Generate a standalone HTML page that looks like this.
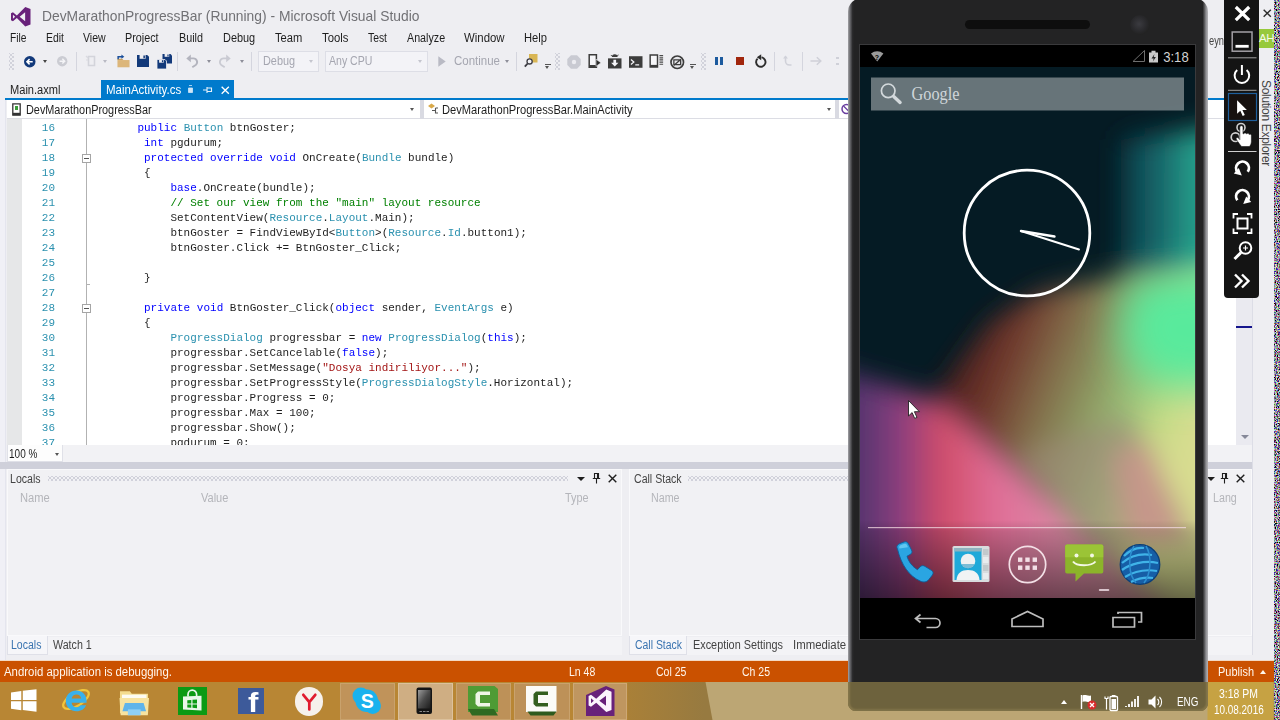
<!DOCTYPE html>
<html lang="en">
<head>
<meta charset="utf-8">
<title>DevMarathonProgressBar (Running) - Microsoft Visual Studio</title>
<style>
*{box-sizing:border-box;margin:0;padding:0}
html,body{width:1280px;height:720px;overflow:hidden}
body{background:#eeeef2;font-family:"Liberation Sans",sans-serif;font-size:12px;color:#1e1e1e;position:relative}
.abs{position:absolute}
svg{position:absolute;overflow:visible}
.t{position:absolute;white-space:pre;line-height:1;transform-origin:0 0;font-family:"Liberation Sans",sans-serif}
.sep{position:absolute;top:52px;width:1px;height:19px;background:#d4d5de}
.dd{position:absolute;width:0;height:0;border-left:2.5px solid transparent;border-right:2.5px solid transparent;border-top:3px solid #555}
.combo{position:absolute;top:51px;height:21px;border:1px solid #dddee6;background:#f3f3f7}
/* editor */
#editor{left:7px;top:119px;width:1229px;height:326px;background:#fff;overflow:hidden}
#gutter{left:0;top:0;width:15px;height:327px;background:#e6e7e8}
#outline-line{left:79px;top:0;width:1px;height:327px;background:#b2b2b2}
.ln{position:absolute;left:19px;width:29px;transform:scaleY(1.06);text-align:right;font-family:"Liberation Mono",monospace;font-size:11px;line-height:15px;color:#2b91af;height:15px}
.cl{position:absolute;left:84.2px;transform:scaleY(1.06);font-family:"Liberation Mono",monospace;font-size:11px;line-height:15px;height:15px;white-space:pre;color:#1e1e1e}
.k{color:#0000ff}.ty{color:#2b91af}.c{color:#008000}.s{color:#a31515}
.fold{position:absolute;left:74.5px;width:9px;height:9px;border:1px solid #a5a5a5;background:#fff}
.fold:after{content:"";position:absolute;left:1px;top:3px;width:5px;height:1px;background:#555}
.panel{position:absolute;background:#f1f1f4;border:1px solid #f9f9fb}
.grip{position:absolute;height:5px;background-image:radial-gradient(circle,#c3c4d0 0.65px,transparent 0.85px),radial-gradient(circle,#c3c4d0 0.65px,transparent 0.85px);background-size:4px 4px;background-position:0 0,2px 2px}
.vgrip{position:absolute;width:5px;background-image:radial-gradient(circle,#c6c7d2 0.65px,transparent 0.85px),radial-gradient(circle,#c6c7d2 0.65px,transparent 0.85px);background-size:4px 4px;background-position:0 0,2px 2px}
</style>
</head>
<body>

<!-- ================= Visual Studio window ================= -->
<div class="abs" style="left:0;top:0;width:1280px;height:682px;background:#eeeef2"></div>

<div class="abs" style="left:0;top:100px;width:6px;height:561px;background:#f0f0f6;border-right:1px solid #e4e5ee"></div>
<!-- VS logo -->
<svg style="left:11px;top:6.5px" width="19.5" height="19.5" viewBox="0 0 24 24"><path fill="#68217a" d="M17.58 0L7.19 10.36 2.4 6.6 0 7.8v8.4l2.4 1.2 4.79-3.76L17.58 24 24 21.42V2.58L17.58 0zM2.4 14.58V9.42L5.1 12l-2.7 2.58zM17.4 17.4L10.62 12l6.78-5.4v10.8z"/></svg>

<!-- document tabs -->
<div class="abs" style="left:101px;top:80px;width:133px;height:19px;background:#007acc"></div>
<div class="abs" style="left:5px;top:98px;width:1247px;height:2px;background:#007acc"></div>

<!-- navigation bar -->
<div class="abs" style="left:7px;top:100px;width:1245px;height:19px;background:#fff;border-bottom:1px solid #dcdde4"></div>
<div class="abs" style="left:420px;top:100px;width:4px;height:19px;background:#d9dae2"></div>
<div class="abs" style="left:835px;top:100px;width:4px;height:19px;background:#d9dae2"></div>
<div class="dd" style="left:410px;top:108px"></div>
<div class="dd" style="left:826.5px;top:108px"></div>

<!-- ===== toolbar row ===== -->
<div class="vgrip" style="left:9px;top:53px;height:17px"></div>
<!-- back -->
<svg style="left:24px;top:55.5px" width="11.5" height="11.5" viewBox="0 0 14 14"><circle cx="7" cy="7" r="7" fill="#12397a"/><path d="M10.6 7H4M6.8 3.8L3.6 7l3.2 3.2" fill="none" stroke="#fff" stroke-width="1.9"/></svg>
<div class="dd" style="left:42.5px;top:60px;border-top-color:#444"></div>
<!-- forward (disabled) -->
<svg style="left:56.8px;top:56px" width="10.4" height="10.4" viewBox="0 0 14 14"><circle cx="7" cy="7" r="7" fill="#cbccd3"/><path d="M3.4 7H10M7.2 3.8L10.4 7l-3.2 3.2" fill="none" stroke="#f4f4f7" stroke-width="1.9"/></svg>
<div class="sep" style="left:75.5px"></div>
<!-- new project (disabled) -->
<svg style="left:85px;top:54px" width="13" height="14" viewBox="0 0 13 14"><path d="M3.5 2.5h6v9h-6z" fill="none" stroke="#d3d4db" stroke-width="1.6"/><path d="M1 2l2 2M1 6h2" stroke="#d9dae0" stroke-width="1.2"/></svg>
<div class="dd" style="left:103px;top:60px;border-top-color:#b9bac4"></div>
<!-- open -->
<svg style="left:115.5px;top:53.5px" width="14.5" height="14" viewBox="0 0 15 14"><path d="M1.5 6h12.5v7.5H1.5z" fill="#dcb67a"/><path d="M1.5 6V4.6h5L7.6 6z" fill="#c9a15f"/><path d="M2.2 5.2V2.6h4.3" fill="none" stroke="#1b4f9b" stroke-width="1.5"/><path d="M5.6 0.4l3 2.2-3 2.2z" fill="#1b4f9b"/></svg>
<!-- save -->
<svg style="left:137px;top:55px" width="12" height="12" viewBox="0 0 12 12"><path d="M0 0h10.2L12 1.8V12H0z" fill="#12397a"/><path d="M2.6 0h6v3.8h-6z" fill="#eeeef2"/><path d="M6.4 0.6h1.5v2.6H6.4z" fill="#12397a"/><path d="M2 7h8v5H2z" fill="#12397a"/></svg>
<!-- save all -->
<svg style="left:157px;top:53.5px" width="15" height="15" viewBox="0 0 15 15"><path d="M5.5 0h8L15 1.5V9.5H5.5z" fill="#12397a"/><path d="M7.6 0h4.6v2.8H7.6z" fill="#eeeef2"/><path d="M10.4 0.4h1.2v2h-1.2z" fill="#12397a"/><path d="M0 5.5h8l1.5 1.5V15H0z" fill="#12397a" stroke="#eeeef2" stroke-width="0.8"/><path d="M2.1 5.9h4.6v2.8H2.1z" fill="#eeeef2"/><path d="M4.9 6.2h1.2v2H4.9z" fill="#12397a"/></svg>
<div class="sep" style="left:177px"></div>
<!-- undo (disabled) -->
<svg style="left:185.5px;top:53.5px" width="13" height="14" viewBox="0 0 13 14"><path d="M4 4.4H7.4a3.7 3.7 0 0 1 2.3 6.6L6.3 13.2" fill="none" stroke="#b3b4be" stroke-width="1.9"/><path d="M0.3 4.4L4.8 0.6V8.2z" fill="#b3b4be"/></svg>
<div class="dd" style="left:206.5px;top:60px;border-top-color:#8d8e99"></div>
<!-- redo (disabled) -->
<svg style="left:218px;top:53.5px" width="13" height="14" viewBox="0 0 13 14"><g transform="translate(13 0) scale(-1 1)"><path d="M4 4.4H7.4a3.7 3.7 0 0 1 2.3 6.6L6.3 13.2" fill="none" stroke="#c9cad2" stroke-width="1.7"/><path d="M0.3 4.4L4.8 0.6V8.2z" fill="#c9cad2"/></g></svg>
<div class="dd" style="left:239.5px;top:60px;border-top-color:#8d8e99"></div>
<div class="sep" style="left:251px"></div>
<!-- config combos -->
<div class="combo" style="left:258px;width:61px"></div>
<div class="dd" style="left:309px;top:60px;border-top-color:#c4c5ce"></div>
<div class="combo" style="left:324.5px;width:103.5px"></div>
<div class="dd" style="left:418px;top:60px;border-top-color:#c4c5ce"></div>
<!-- continue -->
<svg style="left:437.5px;top:55.5px" width="8" height="11" viewBox="0 0 8 11"><path d="M0.3 0.3L7.7 5.5 0.3 10.7z" fill="#b9bac4"/></svg>
<div class="dd" style="left:504.5px;top:60px;border-top-color:#8d8e99"></div>
<div class="sep" style="left:516px"></div>
<!-- find in files -->
<svg style="left:524px;top:53px" width="14" height="15" viewBox="0 0 14 15"><path d="M5 1h8.5v8.5H5z" fill="#d9b655"/><circle cx="5.6" cy="8.4" r="2.6" fill="#f2f2f6" stroke="#3d3d44" stroke-width="1.3"/><path d="M3.8 10.4L0.8 13.6" stroke="#3d3d44" stroke-width="1.8"/></svg>
<!-- overflow -->
<div class="abs" style="left:545px;top:63.5px;width:6px;height:1.3px;background:#555"></div>
<div class="dd" style="left:545px;top:66px;border-top-color:#555"></div>
<div class="vgrip" style="left:555px;top:53px;height:17px"></div>
<!-- hex (disabled) -->
<svg style="left:566.5px;top:54.5px" width="14" height="14" viewBox="0 0 14 14"><path d="M4 0.3h6L13.7 4v6L10 13.7H4L0.3 10V4z" fill="#c9cad2"/><circle cx="7" cy="7" r="2.2" fill="#ececf1"/></svg>
<!-- phone + play -->
<svg style="left:587.5px;top:54px" width="13" height="15" viewBox="0 0 13 15"><path d="M1.2 0.8h7.2v12.4H1.2z" fill="#f6f6f9" stroke="#3c3c3c" stroke-width="1.5"/><path d="M1.2 11h7.2v2.2H1.2z" fill="#3c3c3c"/><path d="M8 5.2l5 3.6-5 3.6z" fill="#2d2d2d" stroke="#eeeef2" stroke-width="0.6"/></svg>
<!-- android box -->
<svg style="left:608px;top:54px" width="13.5" height="14.5" viewBox="0 0 14 15"><path d="M4 3.2a3 3 0 0 1 6 0z" fill="#3c3c3c"/><path d="M3 1l1.5 1.6M11 1L9.5 1.6" stroke="#3c3c3c" stroke-width="0.9"/><path d="M0 4.5h14V15H0z" fill="#3c3c3c"/><path d="M5.6 6h2.8v3h2.4L7 13 3.2 9h2.4z" fill="#f4f4f8"/></svg>
<!-- terminal -->
<svg style="left:629px;top:56px" width="13.5" height="12" viewBox="0 0 14 12"><path d="M0 0h14v12H0z" fill="#3c3c3c"/><path d="M2 3.5l3 2.5-3 2.5M6.5 9h4" fill="none" stroke="#f4f4f8" stroke-width="1.3"/></svg>
<!-- phone + lines -->
<svg style="left:649px;top:54px" width="14.5" height="15" viewBox="0 0 15 15"><path d="M1.2 0.8h7.6v12.4H1.2z" fill="#f6f6f9" stroke="#3c3c3c" stroke-width="1.5"/><path d="M1.2 11h7.6v2.2H1.2z" fill="#3c3c3c"/><path d="M10.8 1.5h3.8M10.8 3.7h3.8M10.8 5.9h3.8M10.8 8.1h3.8M10.8 10.3h3.8" stroke="#4a4a4a" stroke-width="1.2"/></svg>
<!-- circle crossed -->
<svg style="left:669.5px;top:54.5px" width="14.5" height="14.5" viewBox="0 0 15 15"><circle cx="7.5" cy="7.5" r="6.5" fill="#e6e6ea" stroke="#3c3c3c" stroke-width="1.7"/><path d="M4 5h7v5H4zM3.8 10.8l7.6-6.4" fill="none" stroke="#3c3c3c" stroke-width="1.3"/></svg>
<div class="abs" style="left:690px;top:63.5px;width:6px;height:1.3px;background:#555"></div>
<div class="dd" style="left:690px;top:66px;border-top-color:#555"></div>
<div class="vgrip" style="left:701px;top:53px;height:17px"></div>
<!-- pause / stop / restart -->
<div class="abs" style="left:714.5px;top:56.5px;width:3px;height:8.5px;background:#1c5a9e"></div>
<div class="abs" style="left:719.5px;top:56.5px;width:3px;height:8.5px;background:#1c5a9e"></div>
<div class="abs" style="left:735.5px;top:57px;width:8px;height:8px;background:#a1260d"></div>
<svg style="left:754px;top:54px" width="13" height="14" viewBox="0 0 13 14"><path d="M3.6 4.6A4.7 4.7 0 1 0 7.5 3.4" fill="none" stroke="#2d2d2d" stroke-width="1.9"/><path d="M7.2 0.2v6L2.8 3.2z" fill="#2d2d2d"/></svg>
<div class="sep" style="left:773.5px"></div>
<!-- step (disabled) -->
<svg style="left:782px;top:55px" width="12" height="12" viewBox="0 0 12 12"><path d="M3.5 1.5v4.5a4 4 0 0 0 4 4h2" fill="none" stroke="#d0d1d9" stroke-width="1.6"/><path d="M1 3.5l2.5-3 2.5 3z" fill="#d0d1d9"/></svg>
<div class="sep" style="left:801.5px"></div>
<svg style="left:810px;top:56px" width="12" height="10" viewBox="0 0 12 10"><path d="M0.5 5h10M6.8 1.2L10.8 5l-4 3.8" fill="none" stroke="#cfd0d8" stroke-width="1.5"/></svg>
<div class="abs" style="left:836px;top:56.5px;width:2.5px;height:2.5px;background:#cfd0d8"></div>
<div class="abs" style="left:836px;top:62.5px;width:2.5px;height:2.5px;background:#cfd0d8"></div>
<!-- tab icons -->
<svg style="left:188px;top:85px" width="5" height="8" viewBox="0 0 5 8"><path d="M1 0.5h3M0.5 3h4v4.5h-4z" fill="#cfe6f7" stroke="#cfe6f7" stroke-width="0.8"/></svg>
<svg style="left:203px;top:86px" width="10" height="8" viewBox="0 0 10 8"><path d="M0 4h4M4 1v6M4 2h4.5v3.5H4M4 5.5h4.5" fill="none" stroke="#e4f1fb" stroke-width="1.1"/></svg>
<svg style="left:221px;top:85.5px" width="8.5" height="8.5" viewBox="0 0 9 9"><path d="M0.7 0.7l7.6 7.6M8.3 0.7l-7.6 7.6" stroke="#fff" stroke-width="1.4"/></svg>
<!-- nav bar icons -->
<svg style="left:12px;top:103px" width="9" height="13" viewBox="0 0 9 13"><path d="M0.8 0.8h7.4v11.4H0.8z" fill="#fff" stroke="#333" stroke-width="1.3"/><path d="M0.8 9.8h7.4v2.4H0.8z" fill="#333"/><path d="M3 3h3v4H3z" fill="#3a9d3a"/></svg>
<svg style="left:427px;top:103px" width="12" height="12" viewBox="0 0 12 12"><path d="M1 3l3.5-2.5L8 3 4.5 5.5z" fill="#d9a94a"/><path d="M5 7.5h3.5M8.5 5v5h2.5M8.5 5h2.5" fill="none" stroke="#555" stroke-width="1.1"/></svg>
<svg style="left:841px;top:103px" width="11" height="12" viewBox="0 0 11 12"><circle cx="5.5" cy="6" r="4.5" fill="#fff" stroke="#6a3fa0" stroke-width="1.5"/><path d="M2.5 3l6 6" stroke="#6a3fa0" stroke-width="1.2"/></svg>


<!-- code editor -->
<div class="abs" id="editor">
<div class="abs" id="gutter"></div>
<div class="abs" id="outline-line"></div>
<div class="abs" style="left:80px;top:165px;width:3px;height:1px;background:#b2b2b2"></div>
<div class="ln" style="top:2px">16</div>
<div class="cl" style="top:2px">       <span class="k">public</span> <span class="ty">Button</span> btnGoster;</div>
<div class="ln" style="top:17px">17</div>
<div class="cl" style="top:17px">        <span class="k">int</span> pgdurum;</div>
<div class="ln" style="top:32px">18</div>
<div class="cl" style="top:32px">        <span class="k">protected</span> <span class="k">override</span> <span class="k">void</span> OnCreate(<span class="ty">Bundle</span> bundle)</div>
<div class="ln" style="top:47px">19</div>
<div class="cl" style="top:47px">        {</div>
<div class="ln" style="top:62px">20</div>
<div class="cl" style="top:62px">            <span class="k">base</span>.OnCreate(bundle);</div>
<div class="ln" style="top:77px">21</div>
<div class="cl" style="top:77px">            <span class="c">// Set our view from the "main" layout resource</span></div>
<div class="ln" style="top:92px">22</div>
<div class="cl" style="top:92px">            SetContentView(<span class="ty">Resource</span>.<span class="ty">Layout</span>.Main);</div>
<div class="ln" style="top:107px">23</div>
<div class="cl" style="top:107px">            btnGoster = FindViewById&lt;<span class="ty">Button</span>&gt;(<span class="ty">Resource</span>.<span class="ty">Id</span>.button1);</div>
<div class="ln" style="top:122px">24</div>
<div class="cl" style="top:122px">            btnGoster.Click += BtnGoster_Click;</div>
<div class="ln" style="top:137px">25</div>
<div class="ln" style="top:152px">26</div>
<div class="cl" style="top:152px">        }</div>
<div class="ln" style="top:167px">27</div>
<div class="ln" style="top:182px">28</div>
<div class="cl" style="top:182px">        <span class="k">private</span> <span class="k">void</span> BtnGoster_Click(<span class="k">object</span> sender, <span class="ty">EventArgs</span> e)</div>
<div class="ln" style="top:197px">29</div>
<div class="cl" style="top:197px">        {</div>
<div class="ln" style="top:212px">30</div>
<div class="cl" style="top:212px">            <span class="ty">ProgressDialog</span> progressbar = <span class="k">new</span> <span class="ty">ProgressDialog</span>(<span class="k">this</span>);</div>
<div class="ln" style="top:227px">31</div>
<div class="cl" style="top:227px">            progressbar.SetCancelable(<span class="k">false</span>);</div>
<div class="ln" style="top:242px">32</div>
<div class="cl" style="top:242px">            progressbar.SetMessage(<span class="s">"Dosya indiriliyor..."</span>);</div>
<div class="ln" style="top:257px">33</div>
<div class="cl" style="top:257px">            progressbar.SetProgressStyle(<span class="ty">ProgressDialogStyle</span>.Horizontal);</div>
<div class="ln" style="top:272px">34</div>
<div class="cl" style="top:272px">            progressbar.Progress = 0;</div>
<div class="ln" style="top:287px">35</div>
<div class="cl" style="top:287px">            progressbar.Max = 100;</div>
<div class="ln" style="top:302px">36</div>
<div class="cl" style="top:302px">            progressbar.Show();</div>
<div class="ln" style="top:317px">37</div>
<div class="cl" style="top:317px">            pgdurum = 0;</div>
<div class="fold" style="top:35px"></div>
<div class="fold" style="top:185px"></div>

</div>
<!-- editor vertical scrollbar -->
<div class="abs" style="left:1236px;top:119px;width:16px;height:326px;background:#eaeaf0"></div>
<div class="abs" style="left:1236px;top:326px;width:16px;height:2px;background:#15158c"></div>
<div class="dd" style="left:1241px;top:435px;border-top-color:#868999;border-left-width:4px;border-right-width:4px;border-top-width:4px"></div>

<!-- zoom / h-scroll row -->
<div class="abs" style="left:7px;top:445px;width:1245px;height:17px;background:#f2f2f5"></div>
<div class="abs" style="left:7px;top:445px;width:55.5px;height:17px;background:#fdfdfd;border:1px solid #e0e1e8;border-top:0"></div>
<div class="dd" style="left:54.5px;top:453px"></div>

<!-- splitter -->
<div class="abs" style="left:0;top:462px;width:1252px;height:7px;background:#cfd0da"></div>

<!-- Locals panel -->
<div class="panel" style="left:7px;top:469px;width:615px;height:167px"></div>
<div class="grip" style="left:48px;top:476px;width:520px"></div>
<div class="dd" style="left:577px;top:477px;border-left-width:4px;border-right-width:4px;border-top-width:4px;border-top-color:#1e1e1e"></div>
<svg style="left:592px;top:473px" width="9" height="11" viewBox="0 0 9 11"><path d="M2.5 0.5h4v5h-4zM5.5 0.5v5M0.8 5.5h7.4M4.5 5.5v5" fill="none" stroke="#1e1e1e" stroke-width="1.1"/></svg>
<svg style="left:608px;top:474px" width="9" height="9" viewBox="0 0 9 9"><path d="M0.7 0.7l7.6 7.6M8.3 0.7l-7.6 7.6" stroke="#1e1e1e" stroke-width="1.4"/></svg>
<div class="abs" style="left:48px;top:636.5px;width:574px;height:18px;background:#f3f3f6"></div>
<div class="abs" style="left:7px;top:636px;width:41px;height:19px;background:#f6f6f9;border:1px solid #dfe0e8;border-top:0"></div>

<!-- Call Stack panel -->
<div class="panel" style="left:629px;top:469px;width:623px;height:167px"></div>
<div class="grip" style="left:688px;top:476px;width:160px"></div>
<div class="abs" style="left:687px;top:636.5px;width:565px;height:18px;background:#f3f3f6"></div>
<div class="abs" style="left:629px;top:636px;width:58px;height:19px;background:#f6f6f9;border:1px solid #dfe0e8;border-top:0"></div>
<!-- right end of call stack panel (visible past the emulator) -->
<div class="dd" style="left:1207px;top:477px;border-left-width:4px;border-right-width:4px;border-top-width:4px;border-top-color:#1e1e1e"></div>
<svg style="left:1220px;top:473px" width="9" height="11" viewBox="0 0 9 11"><path d="M2.5 0.5h4v5h-4zM5.5 0.5v5M0.8 5.5h7.4M4.5 5.5v5" fill="none" stroke="#1e1e1e" stroke-width="1.1"/></svg>
<svg style="left:1236px;top:474px" width="9" height="9" viewBox="0 0 9 9"><path d="M0.7 0.7l7.6 7.6M8.3 0.7l-7.6 7.6" stroke="#1e1e1e" stroke-width="1.4"/></svg>
<div class="abs" style="left:1252px;top:100px;width:1px;height:555px;background:#dcdde6"></div>

<!-- status bar -->
<div class="abs" style="left:0;top:661px;width:1280px;height:21px;background:#ca5100"></div>
<div class="abs" style="left:0;top:660px;width:1280px;height:1px;background:#f3d9c4"></div>

<div class="dd" style="left:1260px;top:669.5px;border-top:0;border-bottom:4px solid #fff6ec;border-left-width:3.5px;border-right-width:3.5px"></div>

<!-- ===== text labels ===== -->
<div class="t" style="left:41.8px;top:9.3px;font-size:14.3px;color:#717175;transform:scaleX(0.968)">DevMarathonProgressBar (Running) - Microsoft Visual Studio</div>
<div class="t" style="left:9.7px;top:32.1px;font-size:12px;color:#1e1e1e;transform:scaleX(0.853)">File</div>
<div class="t" style="left:45.5px;top:32.1px;font-size:12px;color:#1e1e1e;transform:scaleX(0.87)">Edit</div>
<div class="t" style="left:83px;top:32.1px;font-size:12px;color:#1e1e1e;transform:scaleX(0.88)">View</div>
<div class="t" style="left:125.4px;top:32.1px;font-size:12px;color:#1e1e1e;transform:scaleX(0.899)">Project</div>
<div class="t" style="left:179px;top:32.1px;font-size:12px;color:#1e1e1e;transform:scaleX(0.899)">Build</div>
<div class="t" style="left:222.6px;top:32.1px;font-size:12px;color:#1e1e1e;transform:scaleX(0.91)">Debug</div>
<div class="t" style="left:274.7px;top:32.1px;font-size:12px;color:#1e1e1e;transform:scaleX(0.93)">Team</div>
<div class="t" style="left:321.6px;top:32.1px;font-size:12px;color:#1e1e1e;transform:scaleX(0.942)">Tools</div>
<div class="t" style="left:368px;top:32.1px;font-size:12px;color:#1e1e1e;transform:scaleX(0.863)">Test</div>
<div class="t" style="left:406.7px;top:32.1px;font-size:12px;color:#1e1e1e;transform:scaleX(0.892)">Analyze</div>
<div class="t" style="left:464.4px;top:32.1px;font-size:12px;color:#1e1e1e;transform:scaleX(0.951)">Window</div>
<div class="t" style="left:524.2px;top:32.1px;font-size:12px;color:#1e1e1e;transform:scaleX(0.932)">Help</div>
<div class="t" style="left:262.5px;top:55.2px;font-size:12px;color:#a5a6b0;transform:scaleX(0.907)">Debug</div>
<div class="t" style="left:328.9px;top:55.2px;font-size:12px;color:#a5a6b0;transform:scaleX(0.879)">Any CPU</div>
<div class="t" style="left:453.6px;top:55.2px;font-size:12px;color:#a5a6b0;transform:scaleX(0.957)">Continue</div>
<div class="t" style="left:9.7px;top:83.6px;font-size:12px;color:#1e1e1e;transform:scaleX(0.923)">Main.axml</div>
<div class="t" style="left:106.2px;top:83.6px;font-size:12px;color:#ffffff;transform:scaleX(0.958)">MainActivity.cs</div>
<div class="t" style="left:26.4px;top:103.5px;font-size:12px;color:#1e1e1e;transform:scaleX(0.905)">DevMarathonProgressBar</div>
<div class="t" style="left:442.3px;top:103.5px;font-size:12px;color:#1e1e1e;transform:scaleX(0.928)">DevMarathonProgressBar.MainActivity</div>
<div class="t" style="left:9.2px;top:448.1px;font-size:12px;color:#1e1e1e;transform:scaleX(0.835)">100 %</div>
<div class="t" style="left:10.4px;top:473.2px;font-size:12px;color:#444;transform:scaleX(0.882)">Locals</div>
<div class="t" style="left:20px;top:491.6px;font-size:12px;color:#b4b5ba;transform:scaleX(0.931)">Name</div>
<div class="t" style="left:200.8px;top:491.6px;font-size:12px;color:#b4b5ba;transform:scaleX(0.919)">Value</div>
<div class="t" style="left:565px;top:491.6px;font-size:12px;color:#b4b5ba;transform:scaleX(0.903)">Type</div>
<div class="t" style="left:633.7px;top:473.2px;font-size:12px;color:#444;transform:scaleX(0.881)">Call Stack</div>
<div class="t" style="left:651.2px;top:491.6px;font-size:12px;color:#b4b5ba;transform:scaleX(0.89)">Name</div>
<div class="t" style="left:1212.7px;top:491.6px;font-size:12px;color:#b4b5ba;transform:scaleX(0.891)">Lang</div>
<div class="t" style="left:11.4px;top:639.2px;font-size:12px;color:#3a74b0;transform:scaleX(0.876)">Locals</div>
<div class="t" style="left:53.2px;top:639.2px;font-size:12px;color:#444;transform:scaleX(0.89)">Watch 1</div>
<div class="t" style="left:635px;top:639.2px;font-size:12px;color:#3a74b0;transform:scaleX(0.87)">Call Stack</div>
<div class="t" style="left:692.8px;top:639.2px;font-size:12px;color:#444;transform:scaleX(0.905)">Exception Settings</div>
<div class="t" style="left:792.6px;top:639.2px;font-size:12px;color:#444;transform:scaleX(0.949)">Immediate</div>
<div class="t" style="left:4.2px;top:666.1px;font-size:12px;color:#fff6ec;transform:scaleX(0.95)">Android application is debugging.</div>
<div class="t" style="left:568.7px;top:666.1px;font-size:12px;color:#fff6ec;transform:scaleX(0.876)">Ln 48</div>
<div class="t" style="left:655.6px;top:666.1px;font-size:12px;color:#fff6ec;transform:scaleX(0.876)">Col 25</div>
<div class="t" style="left:741.5px;top:666.1px;font-size:12px;color:#fff6ec;transform:scaleX(0.874)">Ch 25</div>
<div class="t" style="left:1218px;top:666.1px;font-size:12px;color:#fff6ec;transform:scaleX(0.915)">Publish</div>
<div class="t" style="left:1208.5px;top:35.4px;font-size:12px;color:#444;transform:scaleX(0.775)">eyn</div>

<!-- ================= Android emulator window ================= -->
<div class="abs" style="left:847.5px;top:-2px;width:360px;height:713px;border-radius:14px 14px 9px 9px;background:linear-gradient(90deg,#a3a3a7 0,#6a6a6e 2px,#2b2b2d 4.5px,#232324 6px,#232324 354.5px,#4a4a4c 356px,#8e8e92 358px,#b4b4b8 360px)"></div>
<!-- earpiece + camera -->
<div class="abs" style="left:965px;top:20px;width:125px;height:9px;border-radius:4.5px;background:#0e0e0e"></div>
<div class="abs" style="left:1130px;top:15px;width:20px;height:20px;border-radius:10px;background:radial-gradient(circle at 45% 45%,#3b3b40 0,#2a2a2d 45%,#222 70%)"></div>
<!-- screen -->
<div class="abs" style="left:859px;top:44px;width:337px;height:596px;background:#3a3a3c"></div>
<svg style="left:860px;top:45px;overflow:hidden" width="335" height="594" viewBox="860 45 335 594">
<defs>
<filter id="wb" x="-20%" y="-20%" width="140%" height="140%"><feGaussianBlur stdDeviation="13"/></filter>
<filter id="wb2" x="-40%" y="-40%" width="180%" height="180%"><feGaussianBlur stdDeviation="20"/></filter>
<linearGradient id="gpink" gradientUnits="userSpaceOnUse" x1="860" y1="0" x2="1160" y2="0"><stop offset="0" stop-color="#55346e"/><stop offset="0.14" stop-color="#8c3f80"/><stop offset="0.27" stop-color="#d04c68"/><stop offset="0.46" stop-color="#e06f98"/><stop offset="0.66" stop-color="#dc86a4"/><stop offset="1" stop-color="#d29a9e"/></linearGradient>
<linearGradient id="golive" gradientUnits="userSpaceOnUse" x1="960" y1="350" x2="1190" y2="440"><stop offset="0" stop-color="#4a1f1e"/><stop offset="0.18" stop-color="#6f362b"/><stop offset="0.38" stop-color="#826c4a"/><stop offset="0.55" stop-color="#8c9560"/><stop offset="0.72" stop-color="#9cc078"/><stop offset="0.86" stop-color="#c6dc86"/><stop offset="1" stop-color="#d8dc90"/></linearGradient>
<linearGradient id="gteal" gradientUnits="userSpaceOnUse" x1="1112" y1="0" x2="1200" y2="0"><stop offset="0" stop-color="#073540"/><stop offset="0.5" stop-color="#155f66"/><stop offset="1" stop-color="#28a48e"/></linearGradient>
<linearGradient id="gdock" gradientUnits="userSpaceOnUse" x1="0" y1="520" x2="0" y2="600"><stop offset="0" stop-color="#000" stop-opacity="0"/><stop offset="0.15" stop-color="#000" stop-opacity="0.14"/><stop offset="1" stop-color="#000" stop-opacity="0.52"/></linearGradient>
</defs>
<rect x="860" y="45" width="335" height="594" fill="#051b24"/>
<g filter="url(#wb)">
<path d="M1122 140L1270 120 1270 310 1122 300z" fill="url(#gteal)"/>
<path d="M944 404L800 356 800 700 1267 700z" fill="url(#gpink)"/>
<path d="M936 392L990 322 1040 292 1116 278 1270 272 1270 702z" fill="url(#golive)"/>
<path d="M1015 455L1130 415 1200 545 1090 550z" fill="#9c8878" opacity="0.65"/>
<path d="M1112 455L1150 440 1184 540 1132 545z" fill="#d09090" opacity="0.7"/>
</g>
<g filter="url(#wb2)"><path d="M1128 282L1290 262 1290 392 1150 384 1120 345z" fill="#58ea9c"/></g>
<rect x="860" y="500" width="335" height="100" fill="url(#gdock)"/>
<!-- status bar & nav bar -->
<rect x="860" y="45" width="335" height="22" fill="#000"/>
<rect x="860" y="598" width="335" height="41" fill="#000"/>
<!-- search bar -->
<rect x="871" y="77.5" width="313" height="33" fill="#a5abaf" fill-opacity="0.62"/>
<circle cx="888.2" cy="90.8" r="6.8" fill="none" stroke="#d3d9dc" stroke-width="1.7"/>
<path d="M893.7 96.5l6.4 5.9" stroke="#d3d9dc" stroke-width="3.4" stroke-linecap="round"/>
<text x="911.5" y="99.5" font-family="'Liberation Serif',serif" font-size="19" fill="#cfd6d9" textLength="48" lengthAdjust="spacingAndGlyphs">Google</text>
<!-- clock -->
<circle cx="1027" cy="233" r="62.8" fill="none" stroke="#fff" stroke-width="2.8"/>
<path d="M1021 231L1054.5 236.5" stroke="#fff" stroke-width="2.4" stroke-linecap="round"/>
<path d="M1021 231L1079 249.5" stroke="#fff" stroke-width="1.9" stroke-linecap="round"/>
<!-- dock divider -->
<rect x="868" y="527" width="318" height="1.2" fill="#f3d9e2" fill-opacity="0.75"/>
<!-- status icons -->
<path d="M871 53.5l6.2 8 6.2-8a10 10 0 0 0-12.4 0z" fill="#9a9a9a"/>
<text x="874.8" y="59.5" font-family="'Liberation Sans',sans-serif" font-size="7" font-weight="bold" fill="#000">?</text>
<path d="M1144.5 50.5v11h-11.5z" fill="none" stroke="#6e6e6e" stroke-width="1"/>
<path d="M1149 52.5h2.5v-1.8h4v1.8h2.5v10h-9z" fill="#c9c9c9"/>
<path d="M1154.5 54l-3 4.5h2.2l-0.8 3 3-4.5h-2.2z" fill="#222"/>
<text x="1163.2" y="62" font-family="'Liberation Sans',sans-serif" font-size="14.5" fill="#d2d2d2" textLength="25.5" lengthAdjust="spacingAndGlyphs">3:18</text>
<!-- nav buttons -->
<path d="M920.5 614.5l-5 4 5 4M915.5 618.5h20a4.5 4.5 0 0 1 0 9h-9" fill="none" stroke="#bdbdbd" stroke-width="1.7"/>
<path d="M1012 626.5v-7.5l15.5-7.5 15.5 7.5v7.5z" fill="none" stroke="#bdbdbd" stroke-width="1.7"/>
<path d="M1113 617.5h21.5v9.5h-21.5z" fill="none" stroke="#bdbdbd" stroke-width="1.7"/>
<path d="M1118 614v-1.5h23.5v9.5h-3.5" fill="none" stroke="#bdbdbd" stroke-width="1.7"/>
<!-- dock: phone -->
<path d="M897.5 549c-1.5-2.5 0-4.5 2.5-5.5l4-1.5c2-0.8 3.5 0 4.5 2l3 6c1 2 0.3 3.6-1.5 4.6l-3 1.6c1.5 5.5 5.5 10.5 10.5 13.5l2.5-2.7c1.3-1.5 3-1.8 4.8-0.7l6.5 4c2 1.2 2.3 3 1 4.8l-3.5 4.5c-2 2.5-5 3-8.5 1.5-11-5-19-16-22.8-32.1z" fill="#2aa5e2" stroke="#0c5f9c" stroke-width="0.9"/>
<path d="M899.5 548.5c-0.8-1.5 0-2.8 1.5-3.4l3.5-1.3c1-0.4 1.8 0 2.3 1l1.2 2.4z" fill="#6fd0f5" opacity="0.8"/>
<!-- dock: contacts -->
<rect x="952.5" y="546" width="37" height="36" rx="1.5" fill="#d8dcde"/>
<rect x="954.5" y="548" width="27" height="32" fill="#1fa9d9"/>
<rect x="954.5" y="548" width="27" height="3.5" fill="#8fb3bf"/>
<rect x="983" y="549" width="5.5" height="6" fill="#c3c9cc"/><rect x="983" y="557" width="5.5" height="6" fill="#e9ecee"/><rect x="983" y="565" width="5.5" height="6" fill="#c3c9cc"/><rect x="983" y="573" width="5.5" height="6" fill="#e9ecee"/>
<circle cx="968" cy="561" r="7.3" fill="#eef1f2"/>
<path d="M961.3 564a7.3 7.3 0 0 0 13.4 0z" fill="#1b8fc0" opacity="0.55"/>
<path d="M956.5 580c0.5-7 5-10 11.5-10s11 3 11.5 10z" fill="#f1f3f4"/>
<!-- dock: all apps -->
<circle cx="1027.5" cy="564.5" r="18.2" fill="#c8a0a8" fill-opacity="0.1" stroke="#f3dfe6" stroke-width="1.7"/>
<g fill="#f3dfe6"><rect x="1018" y="557.5" width="4.4" height="4.4"/><rect x="1025.3" y="557.5" width="4.4" height="4.4"/><rect x="1032.6" y="557.5" width="4.4" height="4.4"/><rect x="1018" y="565.5" width="4.4" height="4.4"/><rect x="1025.3" y="565.5" width="4.4" height="4.4"/><rect x="1032.6" y="565.5" width="4.4" height="4.4"/></g>
<!-- dock: messaging -->
<path d="M1067 544.5h34.5a1.8 1.8 0 0 1 1.8 1.8v25.5a1.8 1.8 0 0 1-1.8 1.8h-17.5l-8.5 8v-8h-8.5a1.8 1.8 0 0 1-1.8-1.8v-25.5a1.8 1.8 0 0 1 1.8-1.8z" fill="#8cb42a"/>
<path d="M1065.2 546.3a1.8 1.8 0 0 1 1.8-1.8h34.5a1.8 1.8 0 0 1 1.8 1.8v11h-38.1z" fill="#9bc436"/>
<circle cx="1076.5" cy="555.5" r="2" fill="#f3f8e4"/><circle cx="1092" cy="555.5" r="2" fill="#f3f8e4"/>
<path d="M1073 561.5c3.5 5 18.5 5 22.5 0" fill="none" stroke="#f3f8e4" stroke-width="2"/>
<!-- dock: browser -->
<circle cx="1140" cy="564.5" r="19.8" fill="#165ea6"/>
<circle cx="1140" cy="564.5" r="19.8" fill="none" stroke="#0b3f78" stroke-width="1.2"/>
<path d="M1124 556c5-5 12-9 20-8M1122 563c7-6 18-10 30-8M1122 570c8-6 22-10 36-7M1125 577c8-5 20-8 32-6M1131 582c6-3 14-5 22-4" fill="none" stroke="#3fb3e8" stroke-width="2.2"/>
<path d="M1134 546c-6 10-6 28 2 37M1146 546c6 10 5 28-2 37" fill="none" stroke="#2c8fd0" stroke-width="1.5"/>
<rect x="1098.8" y="589" width="10.5" height="2" rx="1" fill="#d9c4cc"/>
<!-- mouse cursor -->
<path d="M908.5 400.5v15.5l3.6-3.4 2.6 5.8 2.3-1-2.6-5.7h5z" fill="#fff" stroke="#222" stroke-width="0.9"/>
</svg>


<!-- ================= Windows taskbar ================= -->
<div class="abs" style="left:0;top:682px;width:1280px;height:38px;background:linear-gradient(90deg,#b88634 0,#b88634 627px,#a98038 628px,#977a40 704px,#977a40 704px)"></div>
<svg style="left:700px;top:682px" width="573" height="38" viewBox="700 682 573 38"><path d="M705.5 682h568v38h-561z" fill="#bca674"/><path d="M1207.5 682h66v38h-66z" fill="#c6a243"/></svg>
<!-- task buttons -->
<div class="abs" style="left:339.5px;top:683px;width:55px;height:37px;background:#c0935a;box-shadow:inset 0 0 0 1px #c9a26d"></div>
<div class="abs" style="left:397.5px;top:683px;width:55px;height:37px;background:#cfae83;box-shadow:inset 0 0 0 1px #dcc19c"></div>
<div class="abs" style="left:455.5px;top:683px;width:55px;height:37px;background:#bd9158;box-shadow:inset 0 0 0 1px #c9a26d"></div>
<div class="abs" style="left:513.5px;top:683px;width:56px;height:37px;background:#bd9158;box-shadow:inset 0 0 0 1px #c9a26d"></div>
<div class="abs" style="left:572.5px;top:683px;width:54.5px;height:37px;background:#bf9660;box-shadow:inset 0 0 0 1px #cda875"></div>
<!-- start -->
<svg style="left:10.5px;top:688.5px" width="25.5" height="23" viewBox="0 0 26 23"><path d="M0 3.3l10.5-1.5v9.2H0zM12 1.6L26 0v11H12zM0 12.3h10.5v9.2L0 20zM12 12.3h14V23l-14-1.7z" fill="#fff"/></svg>
<!-- IE -->
<svg style="left:61px;top:685px" width="30" height="30" viewBox="0 0 30 30"><ellipse cx="15" cy="14.5" rx="14.5" ry="6.5" transform="rotate(-32 15 14.5)" fill="none" stroke="#f1c53b" stroke-width="2.3"/><path d="M15.5 5.5c-6.2 0-10.7 4.6-10.7 10.5 0 6 4.6 10.2 10.8 10.2 4.4 0 8-2.3 9.5-6h-5.6c-0.8 1.3-2.2 2-3.9 2-2.8 0-4.7-1.8-5-4.5h15c0.6-7-3.7-12.2-10.1-12.2zM10.7 13.6c0.5-2.4 2.3-4 4.8-4s4.3 1.6 4.6 4z" fill="#39b1ec"/></svg>
<!-- explorer -->
<svg style="left:119px;top:687.5px" width="30.5" height="28" viewBox="0 0 31 28"><path d="M1 3h10l2 2.5h16.5v20H1z" fill="#f4dc8e"/><path d="M3 6.5h25v6H3z" fill="#fdfbf2"/><path d="M0.5 10h30l-1.2 17.5h-27.6z" fill="#f7e3a0"/><path d="M6 15h19l2.5 8.5h-24z" fill="#5fb4ea"/><path d="M9 21.5h13v6H9z" fill="#8fd0f5"/></svg>
<!-- store -->
<div class="abs" style="left:178px;top:687px;width:28.5px;height:28px;background:#0c9a14"></div>
<svg style="left:178px;top:687px" width="28.5" height="28" viewBox="0 0 28.5 28"><path d="M10 9.5v-2a4.3 4.3 0 0 1 8.6 0v2" fill="none" stroke="#eaf7ea" stroke-width="1.7"/><path d="M5 9.5l18.5-0.8v14.8L5 22.5z" fill="#eaf7ea"/><path d="M9.3 13.2l4-0.3v3.5h-4zM14.5 12.8l4.5-0.4v4h-4.5zM9.3 17.4h4v3.3l-4-0.3zM14.5 17.4h4.5v3.8l-4.5-0.4z" fill="#0c9a14"/></svg>
<!-- facebook -->
<div class="abs" style="left:237.5px;top:688px;width:26px;height:26px;background:#3d5a9a"></div>
<div class="t" style="left:247.5px;top:689.5px;font-size:27px;font-weight:bold;color:#fff;transform:scaleX(1.15)">f</div>
<!-- yandex -->
<div class="abs" style="left:294.5px;top:687px;width:28.5px;height:28.5px;border-radius:50%;background:#f6f1ec"></div>
<svg style="left:294.5px;top:687px" width="28.5" height="28.5" viewBox="0 0 28.5 28.5"><path d="M8.3 7.8l6 7.4 6-7.4M14.3 15.2v7.3" fill="none" stroke="#e01b2f" stroke-width="2.7" stroke-linecap="round"/></svg>
<!-- skype -->
<svg style="left:352px;top:686.5px" width="29.5" height="27.5" viewBox="0 0 30 28"><circle cx="9" cy="9" r="8.5" fill="#19b2ee"/><circle cx="21" cy="19" r="8.5" fill="#19b2ee"/><circle cx="15" cy="14" r="11.5" fill="#19b2ee"/><text x="9" y="21.5" font-family="'Liberation Sans',sans-serif" font-weight="bold" font-size="20" fill="#fff">S</text></svg>
<!-- emulator -->
<svg style="left:416px;top:686.5px" width="16.5" height="27.5" viewBox="0 0 16.5 27.5"><defs><linearGradient id="ph" x1="0" y1="0" x2="1" y2="1"><stop offset="0" stop-color="#9c9c9c"/><stop offset="0.5" stop-color="#4a4a4a"/><stop offset="1" stop-color="#1c1c1c"/></linearGradient></defs><rect x="0.5" y="0.5" width="15.5" height="26.5" rx="2" fill="#151515"/><rect x="2" y="3" width="12.5" height="18.5" fill="url(#ph)"/><path d="M3.5 24.5h2.5M7 24.5h2.5M10.5 24.5h2.5" stroke="#888" stroke-width="1"/></svg>
<!-- camtasia green -->
<svg style="left:468px;top:686px" width="30" height="29.5" viewBox="0 0 30 29.5"><path d="M0 0h26.5l3.5 3v23H0z" fill="#4f9b35"/><path d="M0 23h26l4 6.5H4z" fill="#2f6a22"/><path d="M22 5.5H10L7.5 8v10l2.5 2.5h12v-3.5h-10v-8h10z" fill="#eef5e6"/></svg>
<!-- camtasia white -->
<svg style="left:526px;top:686px" width="30.5" height="29.5" viewBox="0 0 30.5 29.5"><path d="M0 0h30.5v26H0z" fill="#fbfbf7"/><path d="M1.5 25.5h29l-3 4H4.5z" fill="#2e5a1e"/><path d="M22 5.5H10L7.5 8v10l2.5 2.5h12v-3.5h-10v-8h10z" fill="#34601f"/></svg>
<!-- visual studio -->
<svg style="left:585.5px;top:686px" width="28.5" height="30" viewBox="0 0 28.5 30"><path d="M0 9l20-9 8.5 3.5V30H0z" fill="#68217a"/><path d="M20.3 3.6L10.2 12.8 5 8.8 2.6 10v9.6L5 20.8l5.2-4 10.1 9.2 5.2-2.1V5.7zM5 17.3v-5l2.8 2.5zM20 19.8l-6.7-5 6.7-5z" fill="#fbf4fc"/></svg>
<!-- phone body continues, dimmed by the translucent taskbar -->
<div class="abs" style="left:847.5px;top:682px;width:360px;height:29px;border-radius:0 0 8px 8px;background:#6d623d;box-shadow:inset 3px 0 2px -1px #85774b,inset -3px 0 2px -1px #85774b,inset 0 -3px 2px -1px #807248"></div>
<!-- tray -->
<div class="dd" style="left:1060.5px;top:699.5px;border-top:0;border-bottom:4px solid #fff;border-left-width:3.5px;border-right-width:3.5px"></div>
<svg style="left:1080px;top:694px" width="17" height="16" viewBox="0 0 17 16"><path d="M1.5 1v14" stroke="#fff" stroke-width="1.4"/><path d="M2.5 1.5c3-1.5 5 1 8.5 0v6.5c-3.5 1-5.5-1.5-8.5 0z" fill="#fff"/><circle cx="12" cy="11" r="4.5" fill="#d92b2b"/><path d="M10 9l4 4M14 9l-4 4" stroke="#fff" stroke-width="1.3"/></svg>
<svg style="left:1104px;top:693.5px" width="14" height="17" viewBox="0 0 14 17"><rect x="6" y="2.5" width="7.5" height="14" rx="1" fill="none" stroke="#fff" stroke-width="1.3"/><rect x="8" y="1" width="3.5" height="1.5" fill="#fff"/><rect x="7.5" y="5" width="4.5" height="10" fill="#fff"/><path d="M0.5 4.5h4M2.5 4.5v5M1 2.5v2M4 2.5v2M2.5 9.5v6" stroke="#fff" stroke-width="1.2"/></svg>
<svg style="left:1125px;top:696px" width="15" height="12" viewBox="0 0 15 12"><path d="M1 11v-1M4 11v-3M7 11v-5.5M10 11v-8M13 11v-11" stroke="#fff" stroke-width="1.8"/></svg>
<svg style="left:1148px;top:695px" width="15" height="14" viewBox="0 0 15 14"><path d="M0.5 4.5h3l4-4v13l-4-4h-3z" fill="#fff"/><path d="M9.5 4a4 4 0 0 1 0 6M11.5 2a7 7 0 0 1 0 10" fill="none" stroke="#fff" stroke-width="1.1"/></svg>

<div class="t" style="left:1176.5px;top:696.2px;font-size:12px;color:#fff;transform:scaleX(0.819)">ENG</div>
<div class="t" style="left:1218.6px;top:688.4px;font-size:12px;color:#fff;transform:scaleX(0.87)">3:18 PM</div>
<div class="t" style="left:1213.9px;top:704.2px;font-size:12px;color:#fff;transform:scaleX(0.827)">10.08.2016</div>

<!-- ================= emulator side toolbar ================= -->
<div class="abs" style="left:1224px;top:-4px;width:35px;height:301.5px;border-radius:4px;background:#141414"></div>
<svg style="left:1224.5px;top:0" width="33.5" height="298" viewBox="1224.5 0 33.5 298">
<path d="M1235.3 7l13.4 13.2M1248.7 7l-13.4 13.2" stroke="#fff" stroke-width="3.2"/>
<rect x="1231.7" y="32" width="19.8" height="19.2" fill="none" stroke="#a3a0a5" stroke-width="1.5"/>
<path d="M1235 46.3h13.2" stroke="#fff" stroke-width="2.8"/>
<path d="M1227.5 57.8h28.5M1227.5 90.3h28.5" stroke="#a0a0a0" stroke-width="1"/><path d="M1227.5 151.5h28.5" stroke="#cfcfcf" stroke-width="1"/>
<path d="M1236.7 70a7.3 7.3 0 1 0 9.4 0M1241.4 65v10" fill="none" stroke="#fff" stroke-width="2"/>
<rect x="1228" y="93.5" width="28" height="27" fill="#17110f" stroke="#1f5f9c" stroke-width="1.2"/>
<path d="M1236.6 100.2v13.6l3.2-3 2.4 5.1 2.1-1-2.4-5h4.5z" fill="#fff"/>
<!-- touch (with hand pointer overlapping) -->
<circle cx="1240.5" cy="127.5" r="4" fill="none" stroke="#cfcfcf" stroke-width="1.6"/>
<circle cx="1235" cy="137.2" r="4.3" fill="none" stroke="#cfcfcf" stroke-width="1.7"/>
<path d="M1239.3 127c0-1.8 3.2-1.8 3.2 0v6.8l0.8-0.2c0.5-1 2.5-0.9 2.7 0.3 0.7-0.9 2.4-0.6 2.6 0.5 1-0.6 2.3-0.1 2.3 1.1v5.8c0 2.6-1 4.2-2 5.2h-7.8c-1.7-1.9-3.8-4.6-5.3-7.2-0.7-1.4 1.1-2.4 2.1-1.4l1.4 1.7z" fill="#fff" stroke="#141414" stroke-width="0.6"/>
<path d="M1247.2 171.7A6.4 6.4 0 1 0 1237.1 172.1" fill="none" stroke="#fff" stroke-width="2.8"/>
<path d="M1233.3 173.6L1241.3 175.5L1238.3 168.1z" fill="#fff"/>
<path d="M1236.8 200.2A6.4 6.4 0 1 1 1246.9 200.6" fill="none" stroke="#fff" stroke-width="2.8"/>
<path d="M1250.7 202.1L1242.7 204L1245.7 196.6z" fill="#fff"/>
<path d="M1233 218.5v-4.5h4.5M1246.5 214h4.5v4.5M1251 228.5v4.5h-4.5M1237.5 233h-4.5v-4.5" fill="none" stroke="#fff" stroke-width="1.8"/>
<rect x="1237" y="218.5" width="10" height="10" fill="none" stroke="#fff" stroke-width="2"/>
<circle cx="1245" cy="248" r="5.8" fill="none" stroke="#fff" stroke-width="2"/>
<path d="M1240.5 252.5l-6.5 6.5" stroke="#fff" stroke-width="3"/>
<path d="M1242.5 248h5M1245 245.5v5" stroke="#fff" stroke-width="1.2"/>
<path d="M1234.5 274.5l6.5 6.5-6.5 6.5M1241.5 274.5l6.5 6.5-6.5 6.5" fill="none" stroke="#fff" stroke-width="2.4"/>
</svg>


<!-- ===== right edge of VS window ===== -->
<svg style="left:1263px;top:9px" width="8.5" height="8.5" viewBox="0 0 9 9"><path d="M0.7 0.7l7.6 7.6M8.3 0.7l-7.6 7.6" stroke="#2d2d2d" stroke-width="1.5"/></svg>
<div class="abs" style="left:1259px;top:29px;width:14.5px;height:18.5px;background:#97c93c"></div>
<div class="t" style="left:1259px;top:32.5px;font-size:11.5px;color:#f4fae8;letter-spacing:-0.3px">AH</div>
<div class="t" style="left:1265px;top:80px;font-size:12px;color:#444;transform-origin:0 0;transform:rotate(90deg) translate(0,-6.5px);letter-spacing:-0.32px">Solution Explorer</div>
<!-- capture noise strip -->
<svg style="left:1273.5px;top:0" width="6.5" height="720"><defs><filter id="nz" x="0" y="0" width="100%" height="100%"><feTurbulence type="fractalNoise" baseFrequency="0.85" numOctaves="1" seed="7"/><feColorMatrix type="matrix" values="5 0 0 0 -2.3  0 5 0 0 -2.3  0 0 5 0 -2.22  0 0 0 0 1"/><feColorMatrix type="saturate" values="0.6"/></filter></defs><rect width="7.5" height="720" fill="#888" filter="url(#nz)"/></svg>


</body>
</html>
